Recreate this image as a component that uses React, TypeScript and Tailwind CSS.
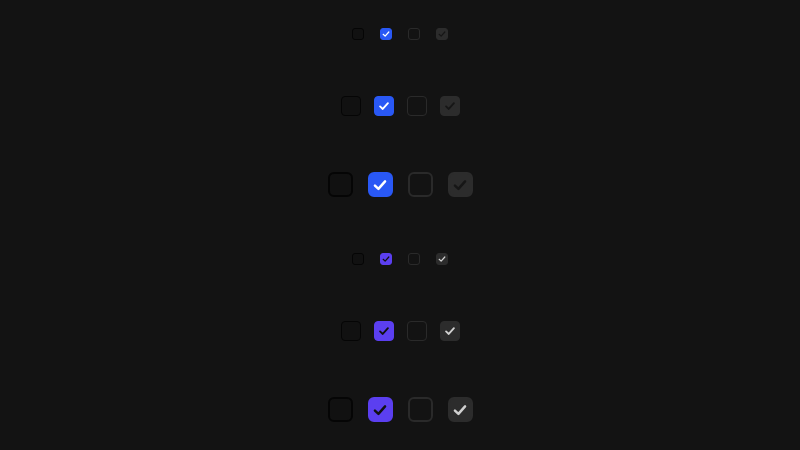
import React from "react";

type Size = "sm" | "md" | "lg";

const sizes: Record<Size, { box: string; icon: string; stroke: number }> = {
  sm: { box: "w-3 h-3 rounded-[3px] border", icon: "w-2.5 h-2.5", stroke: 2 },
  md: { box: "w-5 h-5 rounded-[4px] border-[1.5px]", icon: "w-3.5 h-3.5", stroke: 2.1 },
  lg: { box: "w-[25px] h-[25px] rounded-[6px] border-2", icon: "w-[18px] h-[18px]", stroke: 2.2 },
};

function Check({ className, color, stroke }: { className: string; color: string; stroke: number }) {
  return (
    <svg viewBox="0 0 16 16" fill="none" className={className}>
      <path
        d="M3.5 8.5 L6.6 11.4 L12.5 4.8"
        stroke={color}
        strokeWidth={stroke}
        strokeLinecap="round"
        strokeLinejoin="round"
      />
    </svg>
  );
}

type Variant = "off" | "on" | "offDisabled" | "onDisabled";

function Box({
  size,
  variant,
  accent,
  onCheck,
  disabledCheck,
}: {
  size: Size;
  variant: Variant;
  accent: "blue" | "violet";
  onCheck: string;
  disabledCheck: string;
}) {
  const s = sizes[size];
  let cls = "";
  if (variant === "off") cls = "border-[#050505] bg-[#111111]";
  if (variant === "on")
    cls = accent === "blue" ? "border-[#2958f5] bg-[#2958f5]" : "border-[#5b3ff0] bg-[#5b3ff0]";
  if (variant === "offDisabled") cls = "border-[#2a2a2a] bg-transparent";
  if (variant === "onDisabled") cls = "border-[#2c2c2c] bg-[#2c2c2c]";

  return (
    <div className={`${s.box} ${cls} flex items-center justify-center shrink-0`}>
      {variant === "on" && <Check className={s.icon} color={onCheck} stroke={s.stroke} />}
      {variant === "onDisabled" && <Check className={s.icon} color={disabledCheck} stroke={s.stroke} />}
    </div>
  );
}

function Row({
  size,
  accent,
  onCheck,
  disabledCheck,
  gap,
}: {
  size: Size;
  accent: "blue" | "violet";
  onCheck: string;
  disabledCheck: string;
  gap: string;
}) {
  const variants: Variant[] = ["off", "on", "offDisabled", "onDisabled"];
  return (
    <div className={`flex items-center ${gap}`}>
      {variants.map((v) => (
        <Box key={v} size={size} variant={v} accent={accent} onCheck={onCheck} disabledCheck={disabledCheck} />
      ))}
    </div>
  );
}

export default function App() {
  return (
    <div className="w-[800px] h-[450px] bg-[#131313] flex flex-col items-center justify-around">
      <Row size="sm" accent="blue" onCheck="#ffffff" disabledCheck="#161616" gap="gap-4" />
      <Row size="md" accent="blue" onCheck="#ffffff" disabledCheck="#161616" gap="gap-[13px]" />
      <Row size="lg" accent="blue" onCheck="#ffffff" disabledCheck="#161616" gap="gap-[15px]" />
      <Row size="sm" accent="violet" onCheck="#111111" disabledCheck="#d0d0d0" gap="gap-4" />
      <Row size="md" accent="violet" onCheck="#111111" disabledCheck="#d0d0d0" gap="gap-[13px]" />
      <Row size="lg" accent="violet" onCheck="#111111" disabledCheck="#d0d0d0" gap="gap-[15px]" />
    </div>
  );
}
